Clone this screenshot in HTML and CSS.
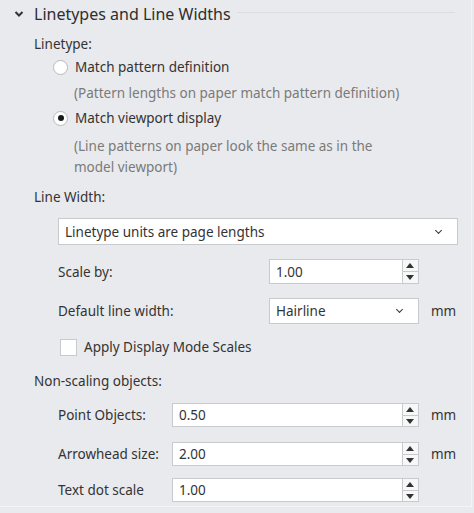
FILE: index.html
```html
<!DOCTYPE html>
<html lang="en">
<head>
<meta charset="utf-8">
<title>Linetypes and Line Widths</title>
<link rel="stylesheet" href="styles.css">
</head>
<body>
<div class="panel">
  <div class="header">
    <svg class="chevron" width="10" height="8" viewBox="0 0 10 8"><path d="M1.5 2 L5 5.5 L8.5 2" fill="none" stroke="#333" stroke-width="2"/></svg>
    <span class="title">Linetypes and Line Widths</span>
    <span class="rule"></span>
  </div>

  <div class="label first">Linetype:</div>
  <div class="radio r1"><span class="dot"></span>Match pattern definition</div>
  <div class="desc d1">(Pattern lengths on paper match pattern definition)</div>
  <div class="radio r2"><span class="dot on"></span>Match viewport display</div>
  <div class="desc d2">(Line patterns on paper look the same as in the<br>model viewport)</div>

  <div class="label lw">Line Width:</div>
  <div class="select wide"><span>Linetype units are page lengths</span><span class="caret"></span></div>

  <div class="field f-scale">
    <span class="flabel">Scale by:</span>
    <div class="spin short"><span class="val">1.00</span><span class="arrows"><i class="up"></i><i class="down"></i></span></div>
  </div>
  <div class="field f-def">
    <span class="flabel">Default line width:</span>
    <div class="select mid"><span>Hairline</span><span class="caret"></span></div>
    <span class="unit">mm</span>
  </div>
  <div class="check"><span class="box"></span>Apply Display Mode Scales</div>

  <div class="label ns">Non-scaling objects:</div>
  <div class="field f-point">
    <span class="flabel narrow">Point Objects:</span>
    <div class="spin long"><span class="val">0.50</span><span class="arrows"><i class="up"></i><i class="down"></i></span></div>
    <span class="unit">mm</span>
  </div>
  <div class="field f-arrow">
    <span class="flabel narrow">Arrowhead size:</span>
    <div class="spin long"><span class="val">2.00</span><span class="arrows"><i class="up"></i><i class="down"></i></span></div>
    <span class="unit">mm</span>
  </div>
  <div class="field f-dot">
    <span class="flabel narrow">Text dot scale</span>
    <div class="spin long"><span class="val">1.00</span><span class="arrows"><i class="up"></i><i class="down"></i></span></div>
  </div>
</div>
</body>
</html>
```

FILE: styles.css
```css
html, body{
  margin: 0;
  background: #E9EAED;
}
body{
  font-family: "Noto Sans", "Open Sans", Arial, sans-serif;
  font-size: 13.5px;
  color: #333333;
}
.panel{
  width: 472px;
  height: 507px;
  border-right: 1px solid #F4F4F6;
  border-bottom: 1px solid #F4F4F6;
  box-sizing: border-box;
}
.header{
  display: flex;
  align-items: center;
  height: 28px;
}
.chevron{
  margin-left: 14px;
  margin-right: 10px;
}
.title{
  font-size: 16px;
  color: #2E2E2E;
}
.rule{
  flex: 1;
  height: 1px;
  background: #DCDDE0;
  margin: 0 16px 3px 6px;
}
.label{
  margin-left: 34px;
  height: 24px;
  line-height: 24px;
}
.first{ margin-top: 4px; }
.lw{ margin-top: 7px; }
.ns{ margin-top: 14px; }

.radio{
  display: flex;
  align-items: center;
  height: 22px;
  margin-left: 53px;
}
.r2{ margin-top: 3px; }
.dot{
  width: 13px;
  height: 13px;
  border: 1px solid #B8B9BC;
  border-radius: 50%;
  background: #FFFFFF;
  margin-right: 7px;
  position: relative;
}
.dot.on::after{
  content: "";
  position: absolute;
  left: 3.5px;
  top: 3.5px;
  width: 6px;
  height: 6px;
  border-radius: 50%;
  background: #1A1A1A;
}
.desc{
  margin-left: 74px;
  color: #7A7A7A;
  line-height: 21px;
}
.d1{ margin-top: 5px; margin-bottom: 2px; }
.d2{ margin-top: 7px; }

.select, .spin{
  display: flex;
  align-items: center;
  background: #FFFFFF;
  border: 1px solid #C9CACD;
  box-sizing: border-box;
}
.select span:first-child, .spin .val{
  flex: 1;
  padding-left: 6px;
}
.caret{
  width: 8px;
  height: 8px;
  margin-right: 14px;
}
.caret::before{
  content: "";
  display: block;
  width: 4px;
  height: 4px;
  border-right: 1.6px solid #333;
  border-bottom: 1.6px solid #333;
  transform: rotate(45deg);
  margin-left: 1px;
}
.wide{
  margin: 9px 0 0 58px;
  width: 400px;
  height: 27px;
}
.field{
  display: flex;
  align-items: center;
  margin-left: 58px;
}
.flabel{
  width: 211px;
}
.flabel.narrow{
  width: 114px;
}
.f-scale{ margin-top: 14px; height: 25px; }
.f-def{ margin-top: 14px; height: 26px; }
.f-point{ margin-top: 10px; height: 24px; }
.f-arrow{ margin-top: 15px; height: 24px; }
.f-dot{ margin-top: 12px; height: 24px; }
.spin{
  height: 100%;
}
.short{ width: 150px; }
.long{ width: 247px; }
.mid{ width: 150px; height: 100%; }
.arrows{
  width: 15px;
  height: 100%;
  border-left: 1px solid #C9CACD;
  display: flex;
  flex-direction: column;
  background: #F7F7F8;
}
.arrows i{
  flex: 1;
  position: relative;
}
.arrows .up{
  border-bottom: 1px solid #C9CACD;
}
.arrows .up::after, .arrows .down::after{
  content: "";
  position: absolute;
  left: 3px;
  width: 0;
  height: 0;
  border-left: 4px solid transparent;
  border-right: 4px solid transparent;
}
.arrows .up::after{
  bottom: 3px;
  border-bottom: 5px solid #333;
}
.arrows .down::after{
  top: 3px;
  border-top: 5px solid #333;
}
.unit{
  margin-left: 12px;
}
.check{
  display: flex;
  align-items: center;
  margin: 15px 0 0 60px;
  height: 16px;
}
.box{
  width: 15px;
  height: 15px;
  border: 1px solid #C9CACD;
  background: #FFFFFF;
  margin-right: 7px;
}
```
